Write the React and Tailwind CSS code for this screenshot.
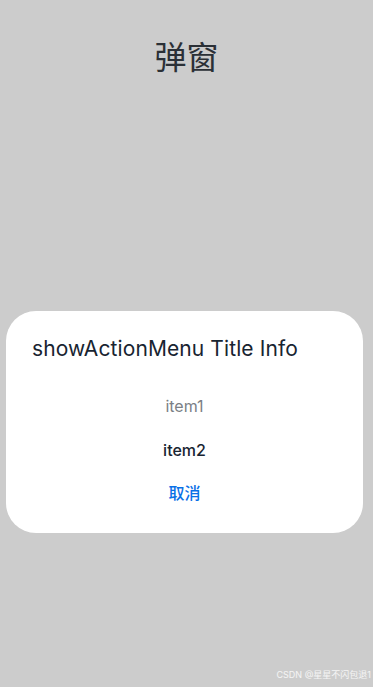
export default function App() {
  return (
    <div className="flex h-[687px] w-[378px] bg-white" style={{ fontFamily: 'Inter, "Noto Sans CJK SC", sans-serif' }}>
      <div className="relative flex h-full w-[373px] flex-col items-center bg-[#cccccc]">
        <div className="mt-[37px] text-[32px] leading-[42px] text-[#2b3036]">弹窗</div>

        {/* action menu dialog */}
        <div className="absolute left-[6px] top-[311px] flex h-[222px] w-[357px] flex-col rounded-[30px] bg-white">
          <div className="pl-[26px] pt-[23px] text-[21px] leading-[30px] tracking-[0.1px] text-[#182431]">showActionMenu Title Info</div>
          <div className="mt-[20px] flex flex-col items-center">
            <div className="text-[16px] leading-[44px] text-[#7b7f85]">item1</div>
            <div className="text-[16px] font-medium leading-[44px] text-[#182431]">item2</div>
            <div className="text-[16px] font-medium leading-[42px] text-[#0a70e6]">取消</div>
          </div>
        </div>

        <div className="absolute bottom-[6px] right-[2px] text-[9px] text-white/80">CSDN @星星不闪包退1</div>
      </div>
    </div>
  )
}
